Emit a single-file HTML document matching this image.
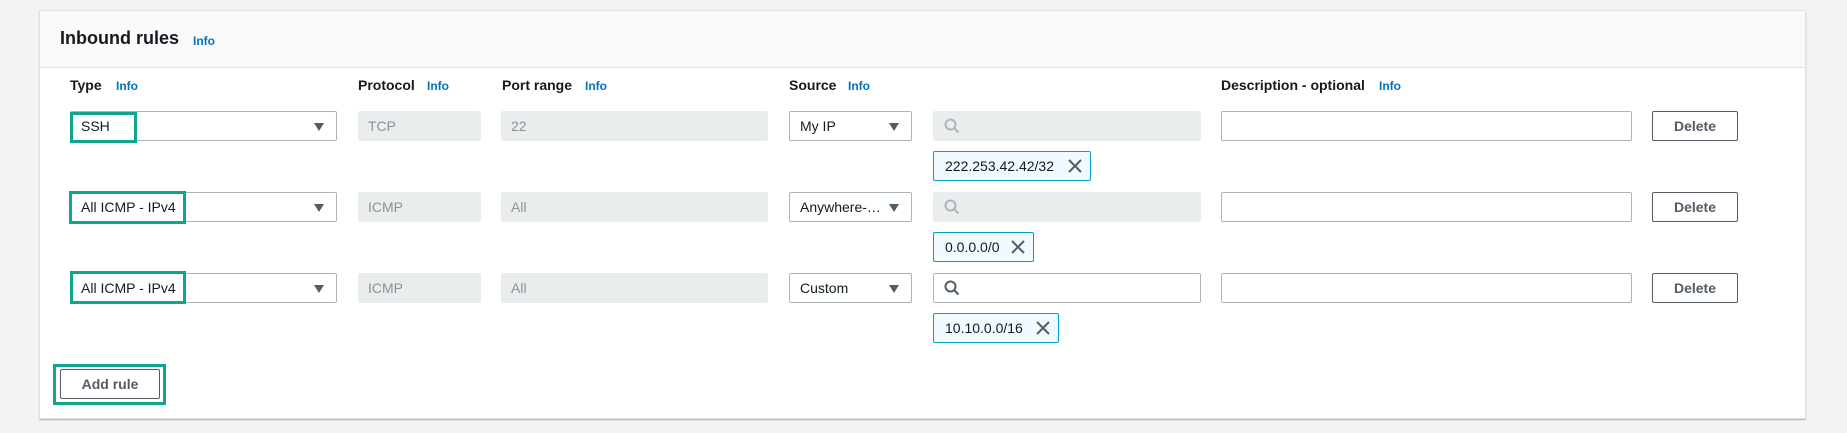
<!DOCTYPE html>
<html><head><meta charset="utf-8"><style>
*{box-sizing:border-box;margin:0;padding:0}
body{width:1847px;height:433px;background:#f2f3f3;font-family:"Liberation Sans",sans-serif;position:relative;overflow:hidden;color:#16191f}
.a{position:absolute}
.panel{left:39px;top:10px;width:1767px;height:409px;background:#fff;border:1px solid #e1e4e4;box-shadow:0 1px 1px rgba(0,28,36,.3)}
.hdr{left:40px;top:11px;width:1765px;height:57px;background:#fafafa;border-bottom:1px solid #e1e4e4}
.title{font-size:18px;font-weight:bold;left:60px;top:28px}
.info{color:#0073bb;font-weight:bold;font-size:12px}
.lbl{font-size:14px;font-weight:bold;top:77px}
.sel{background:#fff;border:1px solid #aab7b8;border-radius:2px;height:30px;font-size:14px;line-height:28px;padding-left:10px}
.dis{background:#eaeded;border-radius:2px;height:30px;font-size:14px;line-height:30px;padding-left:10px;color:#879596}
.inp{background:#fff;border:1px solid #aab7b8;border-radius:2px;height:30px}
.arr{position:absolute;right:12px;top:11px;width:0;height:0;border-left:5.5px solid transparent;border-right:5.5px solid transparent;border-top:8px solid #545b64}
.grn{border:3px solid #0ea58a}
.btn{border:1px solid #545b64;border-radius:2px;background:#fff;height:30px;font-size:14px;font-weight:bold;color:#545b64;text-align:center;line-height:28px}
.chip{background:#f1faff;border:1px solid #00a1c9;border-radius:2px;height:30px;font-size:14px;line-height:28px;padding-left:11px}
.chip svg{position:absolute;right:8px;top:7px}
.srch svg{position:absolute;left:11px;top:7px}
</style></head><body>
<div class="a panel"></div>
<div class="a hdr"></div>
<div class="a title">Inbound rules</div>
<div class="a info" style="left:193px;top:34px">Info</div>

<div class="a lbl" style="left:70px">Type</div><div class="a info" style="left:116px;top:79px">Info</div>
<div class="a lbl" style="left:358px">Protocol</div><div class="a info" style="left:427px;top:79px">Info</div>
<div class="a lbl" style="left:502px">Port range</div><div class="a info" style="left:585px;top:79px">Info</div>
<div class="a lbl" style="left:789px">Source</div><div class="a info" style="left:848px;top:79px">Info</div>
<div class="a lbl" style="left:1221px">Description - optional</div><div class="a info" style="left:1379px;top:79px">Info</div>

<!-- row 1 -->
<div class="a sel" style="left:70px;top:111px;width:267px">SSH<span class="arr"></span></div>
<div class="a grn" style="left:70px;top:112px;width:67px;height:31px"></div>
<div class="a dis" style="left:358px;top:111px;width:123px">TCP</div>
<div class="a dis" style="left:501px;top:111px;width:267px">22</div>
<div class="a sel" style="left:789px;top:111px;width:123px">My IP<span class="arr"></span></div>
<div class="a dis srch" style="left:933px;top:111px;width:268px"><svg width="16" height="16" viewBox="0 0 16 16"><circle cx="6.5" cy="6.5" r="5" fill="none" stroke="#aab7b8" stroke-width="2"/><path d="M10 10l4.5 4.5" stroke="#aab7b8" stroke-width="2"/></svg></div>
<div class="a inp" style="left:1221px;top:111px;width:411px"></div>
<div class="a btn" style="left:1652px;top:111px;width:86px">Delete</div>
<div class="a chip" style="left:933px;top:151px;width:158px">222.253.42.42/32<svg width="14" height="14" viewBox="0 0 14 14"><path d="M1 1l12 12M13 1L1 13" stroke="#545b64" stroke-width="2"/></svg></div>

<!-- row 2 -->
<div class="a sel" style="left:70px;top:192px;width:267px">All ICMP - IPv4<span class="arr"></span></div>
<div class="a grn" style="left:69px;top:191px;width:117px;height:33px"></div>
<div class="a dis" style="left:358px;top:192px;width:123px">ICMP</div>
<div class="a dis" style="left:501px;top:192px;width:267px">All</div>
<div class="a sel" style="left:789px;top:192px;width:123px">Anywhere-…<span class="arr"></span></div>
<div class="a dis srch" style="left:933px;top:192px;width:268px"><svg width="16" height="16" viewBox="0 0 16 16"><circle cx="6.5" cy="6.5" r="5" fill="none" stroke="#aab7b8" stroke-width="2"/><path d="M10 10l4.5 4.5" stroke="#aab7b8" stroke-width="2"/></svg></div>
<div class="a inp" style="left:1221px;top:192px;width:411px"></div>
<div class="a btn" style="left:1652px;top:192px;width:86px">Delete</div>
<div class="a chip" style="left:933px;top:232px;width:101px">0.0.0.0/0<svg width="14" height="14" viewBox="0 0 14 14"><path d="M1 1l12 12M13 1L1 13" stroke="#545b64" stroke-width="2"/></svg></div>

<!-- row 3 -->
<div class="a sel" style="left:70px;top:273px;width:267px">All ICMP - IPv4<span class="arr"></span></div>
<div class="a grn" style="left:70px;top:271px;width:116px;height:33px"></div>
<div class="a dis" style="left:358px;top:273px;width:123px">ICMP</div>
<div class="a dis" style="left:501px;top:273px;width:267px">All</div>
<div class="a sel" style="left:789px;top:273px;width:123px">Custom<span class="arr"></span></div>
<div class="a inp srch" style="left:933px;top:273px;width:268px"><svg width="16" height="16" viewBox="0 0 16 16" style="top:6px;left:10px"><circle cx="6.5" cy="6.5" r="5" fill="none" stroke="#545b64" stroke-width="2"/><path d="M10 10l4.5 4.5" stroke="#545b64" stroke-width="2"/></svg></div>
<div class="a inp" style="left:1221px;top:273px;width:411px"></div>
<div class="a btn" style="left:1652px;top:273px;width:86px">Delete</div>
<div class="a chip" style="left:933px;top:313px;width:126px">10.10.0.0/16<svg width="14" height="14" viewBox="0 0 14 14"><path d="M1 1l12 12M13 1L1 13" stroke="#545b64" stroke-width="2"/></svg></div>

<div class="a btn" style="left:60px;top:369px;width:100px">Add rule</div>
<div class="a grn" style="left:53px;top:364px;width:113px;height:41px"></div>
</body></html>
